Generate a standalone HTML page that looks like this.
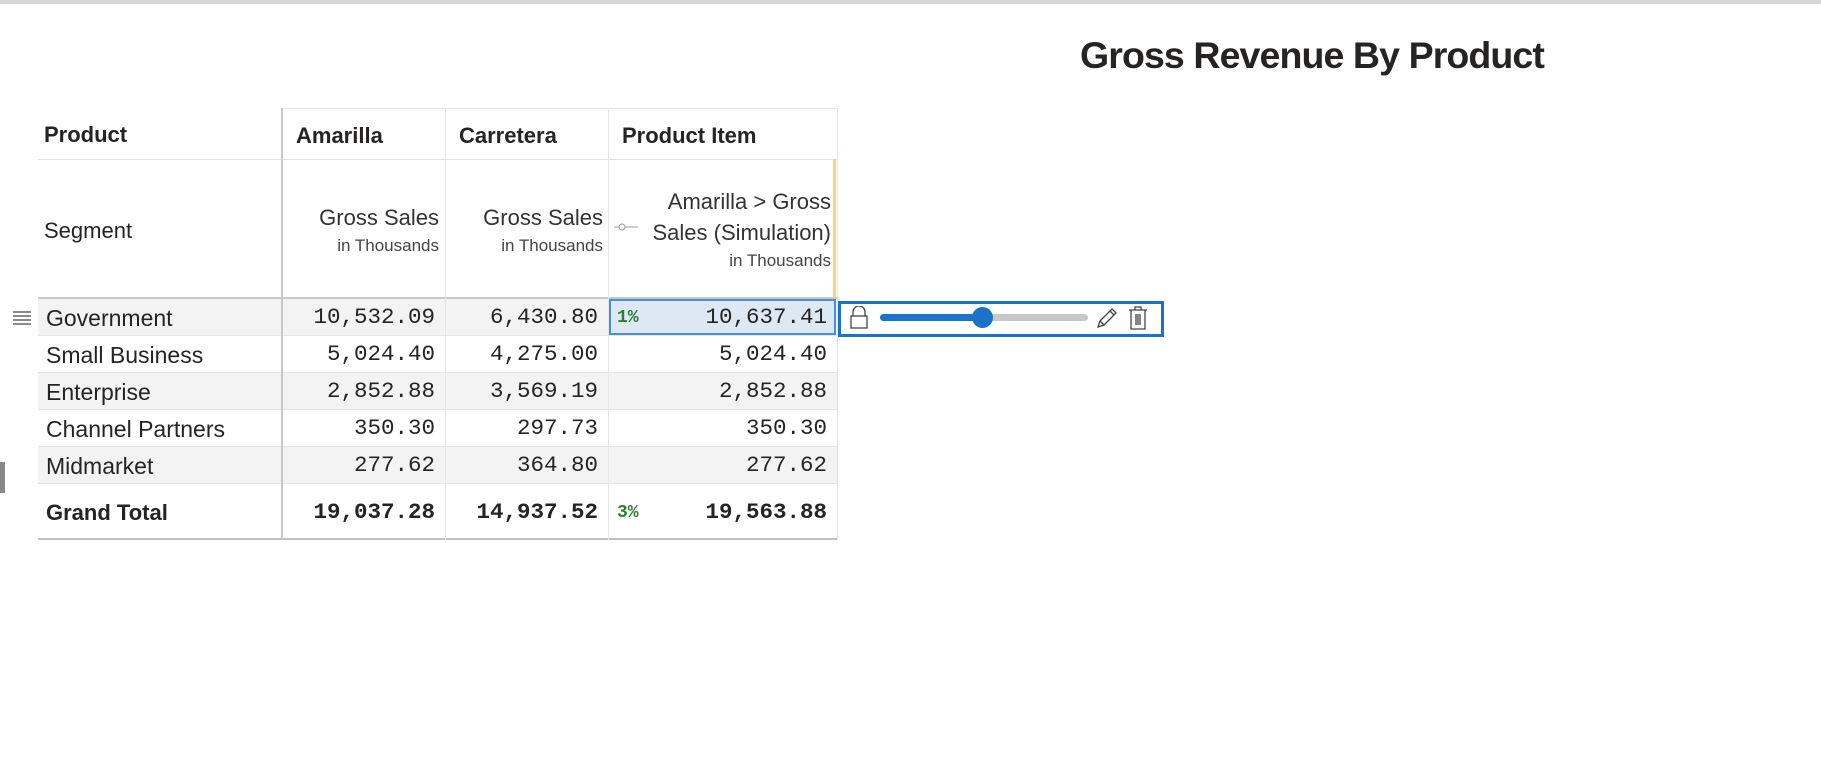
<!DOCTYPE html>
<html><head><meta charset="utf-8"><style>
body{margin:0;width:1821px;height:773px;background:#fff;position:relative;overflow:hidden;font-family:"Liberation Sans",sans-serif;color:#252423}
.a{position:absolute}
.topline{left:0;top:0;width:1821px;height:4px;background:#d6d6d6}
.title{left:1080px;top:34px;font-size:37.5px;font-weight:bold;color:#252423;white-space:nowrap;letter-spacing:-0.9px}
.hl{position:absolute;height:1px;background:#e4e4e4}
.vl{position:absolute;width:1px;background:#e6e6e6}
.t{position:absolute;font-size:22px;white-space:nowrap}
.n{position:absolute;font-family:"Liberation Mono",monospace;font-size:22.5px;text-align:right;white-space:nowrap}
.b{font-weight:bold}
.row{position:absolute;left:38px;width:799px;height:37px}
.g{color:#2f7d32;font-weight:bold;font-family:"Liberation Mono",monospace;font-size:18px;position:absolute}
</style></head><body>
<div class="a topline"></div>
<div class="a title">Gross Revenue By Product</div>

<div class="row" style="top:298px;background:#f3f3f3"></div>
<div class="row" style="top:372px;background:#f3f3f3"></div>
<div class="row" style="top:446px;background:#f3f3f3"></div>
<div class="a" style="left:609px;top:299px;width:227px;height:36px;background:#dee8f2;border:2px solid #4a90d0;box-sizing:border-box"></div>

<div class="hl" style="left:281px;top:108px;width:556px"></div>
<div class="hl" style="left:38px;top:159px;width:799px"></div>
<div class="hl" style="left:38px;top:297px;width:799px;height:2px;background:#c8c8c8"></div>
<div class="hl" style="left:38px;top:335px;width:799px"></div>
<div class="hl" style="left:38px;top:372px;width:799px"></div>
<div class="hl" style="left:38px;top:409px;width:799px"></div>
<div class="hl" style="left:38px;top:446px;width:799px"></div>
<div class="hl" style="left:38px;top:483px;width:799px"></div>
<div class="hl" style="left:38px;top:538px;width:799px;height:2px;background:#c0c0c0"></div>
<div class="vl" style="left:281px;top:108px;height:432px;width:2px;background:#c8c8c8"></div>
<div class="vl" style="left:445px;top:108px;height:432px"></div>
<div class="vl" style="left:608px;top:108px;height:432px"></div>
<div class="vl" style="left:837px;top:108px;height:432px"></div>
<div class="vl" style="left:833px;top:159px;height:139px;width:3px;background:#f0d777"></div>

<div class="t b" style="left:44px;top:122px">Product</div>
<div class="t b" style="left:296px;top:123px">Amarilla</div>
<div class="t b" style="left:459px;top:123px">Carretera</div>
<div class="t b" style="left:622px;top:123px">Product Item</div>
<div class="t" style="left:44px;top:218px">Segment</div>
<div class="t" style="left:282px;width:157px;text-align:right;top:205px;color:#333">Gross Sales</div>
<div class="t" style="left:282px;width:157px;text-align:right;top:236px;font-size:17px;color:#444">in Thousands</div>
<div class="t" style="left:446px;width:157px;text-align:right;top:205px;color:#333">Gross Sales</div>
<div class="t" style="left:446px;width:157px;text-align:right;top:236px;font-size:17px;color:#444">in Thousands</div>
<div class="t" style="left:609px;width:222px;text-align:right;top:189px;color:#333">Amarilla &gt; Gross</div>
<div class="t" style="left:609px;width:222px;text-align:right;top:220px;color:#333">Sales (Simulation)</div>
<div class="t" style="left:609px;width:222px;text-align:right;top:251px;font-size:17px;color:#444">in Thousands</div>
<svg class="a" style="left:614px;top:222px" width="24" height="10"><line x1="0" y1="5" x2="24" y2="5" stroke="#999"/><circle cx="8" cy="5" r="3" fill="#fff" stroke="#999"/></svg>

<svg class="a" style="left:13px;top:311px" width="18" height="14"><path d="M0 1H18M0 5H18M0 9H18M0 13H18" stroke="#666" stroke-width="1.4"/></svg>
<div class="a" style="left:0;top:462px;width:5px;height:31px;background:#888"></div>

<div class="t" style="left:46px;top:305px;font-size:23px">Government</div>
<div class="t" style="left:46px;top:342px;font-size:23px">Small Business</div>
<div class="t" style="left:46px;top:379px;font-size:23px">Enterprise</div>
<div class="t" style="left:46px;top:416px;font-size:23px">Channel Partners</div>
<div class="t" style="left:46px;top:453px;font-size:23px">Midmarket</div>
<div class="t b" style="left:46px;top:500px">Grand Total</div>

<div class="n" style="left:282px;width:153px;top:304px">10,532.09</div>
<div class="n" style="left:282px;width:153px;top:341px">5,024.40</div>
<div class="n" style="left:282px;width:153px;top:378px">2,852.88</div>
<div class="n" style="left:282px;width:153px;top:415px">350.30</div>
<div class="n" style="left:282px;width:153px;top:452px">277.62</div>
<div class="n b" style="left:282px;width:153px;top:499px">19,037.28</div>

<div class="n" style="left:446px;width:152px;top:304px">6,430.80</div>
<div class="n" style="left:446px;width:152px;top:341px">4,275.00</div>
<div class="n" style="left:446px;width:152px;top:378px">3,569.19</div>
<div class="n" style="left:446px;width:152px;top:415px">297.73</div>
<div class="n" style="left:446px;width:152px;top:452px">364.80</div>
<div class="n b" style="left:446px;width:152px;top:499px">14,937.52</div>

<div class="g" style="left:617px;top:308px">1%</div>
<div class="g" style="left:617px;top:503px">3%</div>
<div class="n" style="left:609px;width:218px;top:304px">10,637.41</div>
<div class="n" style="left:609px;width:218px;top:341px">5,024.40</div>
<div class="n" style="left:609px;width:218px;top:378px">2,852.88</div>
<div class="n" style="left:609px;width:218px;top:415px">350.30</div>
<div class="n" style="left:609px;width:218px;top:452px">277.62</div>
<div class="n b" style="left:609px;width:218px;top:499px">19,563.88</div>

<div class="a" style="left:838px;top:301px;width:326px;height:36px;border:3px solid #1a73c8;box-sizing:border-box;background:#fff"></div>
<svg class="a" style="left:850px;top:306px" width="18" height="24"><path d="M3 10V6a6 6 0 0 1 12 0v4" fill="none" stroke="#444" stroke-width="1.3"/><rect x="1" y="10" width="16" height="12" fill="none" stroke="#444" stroke-width="1.3"/></svg>
<div class="a" style="left:880px;top:314px;width:208px;height:7px;border-radius:4px;background:#c8c8c8"></div>
<div class="a" style="left:880px;top:314px;width:104px;height:7px;border-radius:4px;background:#1a73c8"></div>
<div class="a" style="left:972px;top:307px;width:21px;height:21px;border-radius:50%;background:#1a73c8"></div>
<svg class="a" style="left:1095px;top:306px" width="24" height="24"><path d="M3 21l2-6L17 3l4 4L9 19zM5 15l4 4M15 5l4 4" fill="none" stroke="#444" stroke-width="1.3"/></svg>
<svg class="a" style="left:1128px;top:305px" width="20" height="26"><path d="M1 5H19M7 5V2H13V5M3 5V24H17V5M8 9V20M10 9V20M12 9V20" fill="none" stroke="#444" stroke-width="1.3"/></svg>
</body></html>
